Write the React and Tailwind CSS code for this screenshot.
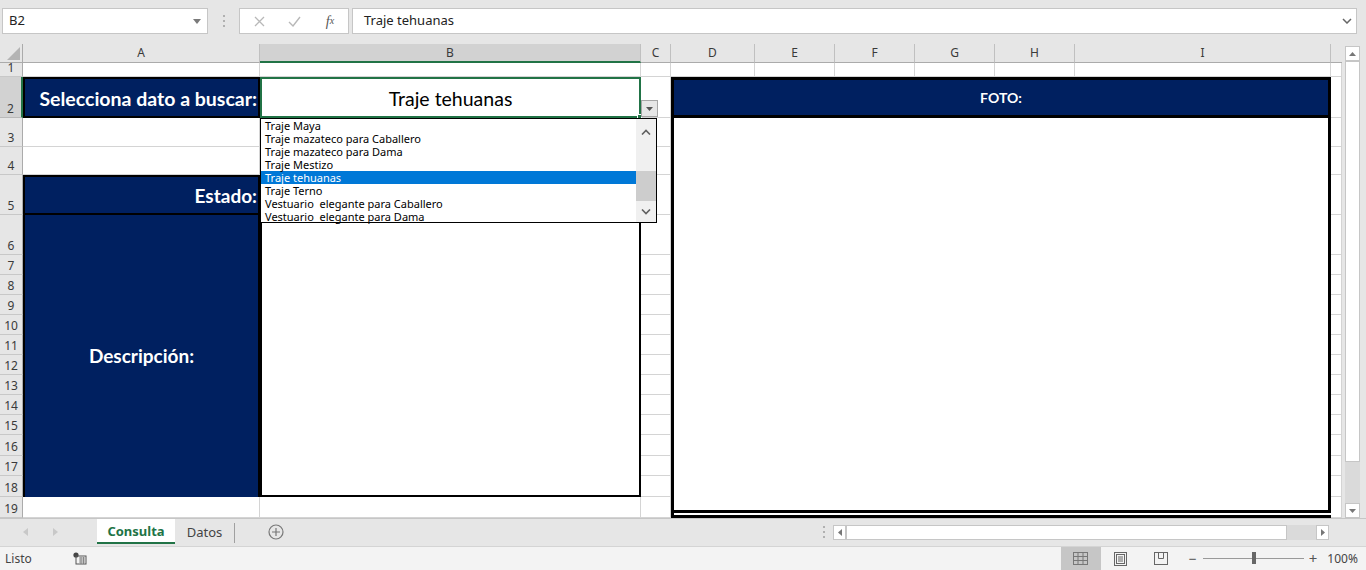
import React from "react";

const cols = ["A", "B", "C", "D", "E", "F", "G", "H", "I"];

const items = [
  "Traje Maya",
  "Traje mazateco para Caballero",
  "Traje mazateco para Dama",
  "Traje Mestizo",
  "Traje tehuanas",
  "Traje Terno",
  "Vestuario  elegante para Caballero",
  "Vestuario  elegante para Dama",
];

function G() {
  return <div className="bg-white border-r border-b border-[#d4d4d4]" />;
}

function RH({ n, sel }) {
  return (
    <div
      className={
        sel
          ? "bg-[#d2d2d2] border-r-2 border-r-[#217346] border-b border-b-[#b9b9b9] flex items-end justify-center text-[12px] leading-none pb-[2px] text-[#3a3a3a]"
          : "bg-[#e6e6e6] border-r border-r-[#ababab] border-b border-b-[#c8c8c8] flex items-end justify-center text-[12px] leading-none pb-[2px] text-[#3a3a3a]"
      }
    >
      {n}
    </div>
  );
}

function CH({ l, sel }) {
  return (
    <div
      className={
        sel
          ? "bg-[#d2d2d2] border-r border-r-[#c0c0c0] border-b-2 border-b-[#217346] flex items-center justify-center text-[12px] text-[#3a3a3a]"
          : "bg-[#e6e6e6] border-r border-r-[#c0c0c0] border-b border-b-[#ababab] flex items-center justify-center text-[12px] text-[#3a3a3a]"
      }
    >
      {l}
    </div>
  );
}

function Sheet() {
  const mid = [];
  for (let r = 7; r <= 18; r++) {
    mid.push(<RH key={"rh" + r} n={r} />);
    mid.push(<G key={"c" + r} />);
    mid.push(<G key={"j" + r} />);
  }

  return (
    <div className="relative w-[1342px] h-[474px] grid grid-cols-[23px_237px_381px_30px_84px_80px_80px_80px_80px_256px_11px] grid-rows-[19px_14px_41px_29px_28px_40px_40px_20px_20px_20px_20px_20px_20px_20px_20px_20px_21px_20px_21px_21px]">
      {/* header row */}
      <div className="bg-[#e6e6e6] border-r border-r-[#ababab] border-b border-b-[#ababab] relative">
        <svg className="absolute right-[2px] bottom-[2px]" width="13" height="13" viewBox="0 0 13 13">
          <polygon points="13,0 13,13 0,13" fill="#b4b4b4" />
        </svg>
      </div>
      {cols.map((c) => (
        <CH key={c} l={c} sel={c === "B"} />
      ))}
      <div className="bg-[#e6e6e6] border-b border-b-[#ababab]" />

      {/* row 1 */}
      <RH n={1} />
      <G /><G /><G /><G /><G /><G /><G /><G /><G /><G />

      {/* row 2 */}
      <RH n={2} sel />
      <div className="bg-[#002060] border-2 border-black flex items-center justify-end pr-[1px] pt-[3px] font-['Lato'] font-bold text-[19.5px] text-white whitespace-nowrap">
        Selecciona dato a buscar:
      </div>
      <div className="relative bg-white border-2 border-[#217346] flex items-center justify-center pt-[3px] font-['Lato'] text-[19.5px] text-black">
        Traje tehuanas
        <div className="absolute right-[-3px] bottom-[-3px] w-[5px] h-[5px] bg-[#217346] border border-white" />
      </div>
      <G />
      <div className="col-span-6 bg-[#002060] border-[3px] border-black flex items-center justify-center font-['Lato'] font-bold text-[14px] text-white">
        FOTO:
      </div>
      <G />

      {/* row 3 */}
      <RH n={3} />
      <G />
      <div className="row-span-16 bg-white border-l-2 border-r-2 border-b-2 border-black" />
      <G />
      <div className="col-span-6 row-span-17 bg-white flex flex-col">
        <div className="flex-1 border-l-[3px] border-r-[3px] border-b-[3px] border-black" />
        <div className="h-[2px] border-l-[3px] border-black" />
        <div className="h-[3px] bg-black" />
      </div>
      <G />

      {/* row 4 */}
      <RH n={4} />
      <G />
      <G />
      <G />

      {/* row 5 */}
      <RH n={5} />
      <div className="bg-[#002060] border-2 border-black flex items-center justify-end pr-[1px] pt-[2px] font-['Lato'] font-bold text-[19px] text-white">
        Estado:
      </div>
      <G />
      <G />

      {/* row 6 */}
      <RH n={6} />
      <div className="row-span-13 bg-[#002060] border-l-2 border-r-2 border-black flex items-center justify-center font-['Lato'] font-bold text-[19px] text-white">
        Descripción:
      </div>
      <G />
      <G />

      {mid}

      {/* row 19 */}
      <RH n={19} />
      <G />
      <G />
      <G />
      <G />

      {/* validation dropdown arrow */}
      <div className="absolute left-[641px] top-[56px] w-[17px] h-[17px] bg-[#e6e6e6] border border-[#a6a6a6] flex items-center justify-center">
        <svg width="7" height="4" viewBox="0 0 7 4">
          <polygon points="0,0 7,0 3.5,4" fill="#555" />
        </svg>
      </div>

      {/* validation list */}
      <div className="absolute left-[260px] top-[74px] w-[397px] h-[105px] bg-white border border-black flex">
        <div className="flex-1">
          {items.map((t, i) => (
            <div
              key={t}
              className={
                i === 4
                  ? "h-[13px] leading-[13px] pl-[4px] text-[11px] bg-[#0078d7] text-white whitespace-pre font-['Noto_Sans']"
                  : "h-[13px] leading-[13px] pl-[4px] text-[11px] text-black whitespace-pre font-['Noto_Sans']"
              }
            >
              {t}
            </div>
          ))}
        </div>
        <div className="w-[20px] bg-[#f0f0f0] flex flex-col">
          <div className="h-[21px] flex items-center justify-center pt-[4px]">
            <svg width="10" height="6" viewBox="0 0 10 6">
              <polyline points="1,5.5 5,1.5 9,5.5" fill="none" stroke="#606060" strokeWidth="1.6" />
            </svg>
          </div>
          <div className="h-[31px]" />
          <div className="h-[30px] bg-[#cdcdcd]" />
          <div className="flex-1 flex items-center justify-center">
            <svg width="10" height="6" viewBox="0 0 10 6">
              <polyline points="1,0.5 5,4.5 9,0.5" fill="none" stroke="#606060" strokeWidth="1.6" />
            </svg>
          </div>
        </div>
      </div>
    </div>
  );
}

function ArrowBox({ dir }) {
  return (
    <div className="w-[15px] h-[15px] bg-white border border-[#c6c6c6] flex items-center justify-center">
      <svg width="7" height="4" viewBox="0 0 7 4">
        {dir === "up" ? (
          <polygon points="0,4 7,4 3.5,0" fill="#777" />
        ) : (
          <polygon points="0,0 7,0 3.5,4" fill="#777" />
        )}
      </svg>
    </div>
  );
}

export default function App() {
  return (
    <div className="w-[1366px] h-[570px] bg-[#e6e6e6] flex flex-col overflow-hidden font-['Noto_Sans'] text-[#3a3a3a]">
      {/* formula bar */}
      <div className="h-[44px] flex items-start pt-[8px] pl-[2px]">
        <div className="w-[206px] h-[26px] bg-white border border-[#c6c6c6] flex items-center justify-between pl-[6px] pr-[6px] text-[13px] text-[#222]">
          <span>B2</span>
          <svg width="8" height="5" viewBox="0 0 8 5">
            <polygon points="0,0 8,0 4,5" fill="#7a7a7a" />
          </svg>
        </div>
        <div className="w-[31px] h-[26px] flex flex-col items-center justify-center gap-[3px]">
          <div className="w-[2px] h-[2px] bg-[#b0b0b0]" />
          <div className="w-[2px] h-[2px] bg-[#b0b0b0]" />
          <div className="w-[2px] h-[2px] bg-[#b0b0b0]" />
        </div>
        <div className="w-[110px] h-[26px] bg-white border border-[#c6c6c6] flex items-center">
          <div className="w-[37px] flex justify-center pl-[2px]">
            <svg width="11" height="11" viewBox="0 0 11 11">
              <path d="M1 1 L10 10 M10 1 L1 10" stroke="#b8b8b8" strokeWidth="1.3" />
            </svg>
          </div>
          <div className="w-[35px] flex justify-center">
            <svg width="13" height="11" viewBox="0 0 13 11">
              <path d="M1 6 L5 10 L12 1" fill="none" stroke="#b8b8b8" strokeWidth="1.4" />
            </svg>
          </div>
          <div className="w-[36px] flex justify-center font-['Liberation_Serif'] italic text-[14px] text-[#555]">
            f<span className="text-[10px] relative top-[2px]">x</span>
          </div>
        </div>
        <div className="ml-[3px] w-[1005px] h-[26px] bg-white border border-[#c6c6c6] flex items-center justify-between pl-[11px] pr-[4px] text-[13px] text-[#222]">
          <span>Traje tehuanas</span>
          <svg width="10" height="6" viewBox="0 0 10 6">
            <polyline points="1,1 5,5 9,1" fill="none" stroke="#666" strokeWidth="1.5" />
          </svg>
        </div>
      </div>

      {/* sheet + vertical scrollbar */}
      <div className="flex h-[474px]">
        <Sheet />
        <div className="w-[24px] pl-[3px] pt-[2px] flex flex-col">
          <ArrowBox dir="up" />
          <div className="h-[401px] w-[15px] bg-white border border-[#c6c6c6]" />
          <div className="flex-1 w-[15px] bg-[#dadada]" />
          <ArrowBox dir="down" />
        </div>
      </div>

      {/* sheet tabs */}
      <div className="h-[28px] border-t border-[#c6c6c6] flex items-start">
        <div className="w-[97px] h-[26px] flex items-center">
          <svg className="ml-[23px]" width="5" height="8" viewBox="0 0 5 8">
            <polygon points="5,0 5,8 0,4" fill="#c8c8c8" />
          </svg>
          <svg className="ml-[25px]" width="5" height="8" viewBox="0 0 5 8">
            <polygon points="0,0 0,8 5,4" fill="#c8c8c8" />
          </svg>
        </div>
        <div className="w-[78px] h-[25px] pt-[2px] bg-white border-b-2 border-[#217346] flex items-center justify-center font-bold text-[13px] text-[#217346]">
          Consulta
        </div>
        <div className="w-[59px] h-[25px] pt-[2px] flex items-center justify-center text-[13px] text-[#444]">
          Datos
        </div>
        <div className="w-[1px] h-[20px] mt-[4px] bg-[#a0a0a0]" />
        <div className="ml-[33px] h-[26px] flex items-center">
          <svg width="16" height="16" viewBox="0 0 16 16">
            <circle cx="8" cy="8" r="7" fill="none" stroke="#777" strokeWidth="1.2" />
            <path d="M8 4 V12 M4 8 H12" stroke="#777" strokeWidth="1.2" />
          </svg>
        </div>
        <div className="ml-[532px] w-[16px] h-[26px] flex flex-col items-center justify-center gap-[3px]">
          <div className="w-[2px] h-[2px] bg-[#b0b0b0]" />
          <div className="w-[2px] h-[2px] bg-[#b0b0b0]" />
          <div className="w-[2px] h-[2px] bg-[#b0b0b0]" />
        </div>
        <div className="ml-[1px] mt-[6px] flex h-[15px]">
          <div className="w-[13px] h-[15px] bg-white border border-[#c6c6c6] flex items-center justify-center">
            <svg width="4" height="7" viewBox="0 0 4 7">
              <polygon points="4,0 4,7 0,3.5" fill="#777" />
            </svg>
          </div>
          <div className="w-[441px] h-[15px] bg-white border border-[#c6c6c6]" />
          <div className="w-[29px] h-[15px] bg-[#dadada]" />
          <div className="w-[13px] h-[15px] bg-white border border-[#c6c6c6] flex items-center justify-center">
            <svg width="4" height="7" viewBox="0 0 4 7">
              <polygon points="0,0 0,7 4,3.5" fill="#777" />
            </svg>
          </div>
        </div>
      </div>

      {/* status bar */}
      <div className="h-[24px] bg-[#f3f3f3] border-t border-[#d4d4d4] flex items-center text-[12px] text-[#444]">
        <span className="ml-[5px]">Listo</span>
        <svg className="ml-[41px]" width="14" height="13" viewBox="0 0 14 13">
          <circle cx="3" cy="3" r="2.6" fill="#444" />
          <rect x="3" y="4" width="10" height="8" fill="none" stroke="#555" strokeWidth="1" />
          <path d="M6 6 H12 M6 8 H12 M6 10 H12 M8 5 V12 M10.5 5 V12" stroke="#777" strokeWidth="0.8" />
        </svg>
        <div className="ml-[974px] w-[40px] h-[23px] bg-[#c6c6c6] flex items-center justify-center">
          <svg width="15" height="13" viewBox="0 0 15 13">
            <rect x="0.5" y="0.5" width="14" height="12" fill="none" stroke="#777" />
            <path d="M5 0.5 V12.5 M10 0.5 V12.5 M0.5 4.5 H14.5 M0.5 8.5 H14.5" stroke="#777" />
          </svg>
        </div>
        <div className="w-[40px] h-[23px] flex items-center justify-center">
          <svg width="13" height="14" viewBox="0 0 13 14">
            <rect x="0.5" y="0.5" width="12" height="13" fill="none" stroke="#666" />
            <rect x="2.5" y="2.5" width="8" height="9" fill="none" stroke="#666" />
            <path d="M4 5 H9 M4 7 H9 M4 9 H9" stroke="#666" />
          </svg>
        </div>
        <div className="w-[40px] h-[23px] flex items-center justify-center">
          <svg width="14" height="13" viewBox="0 0 14 13">
            <rect x="0.5" y="0.5" width="13" height="12" fill="none" stroke="#666" />
            <path d="M4.5 0.5 V6.5 H9.5 V0.5" fill="none" stroke="#666" />
          </svg>
        </div>
        <span className="ml-[8px] text-[14px] text-[#555]">−</span>
        <div className="relative ml-[6px] w-[101px] h-[1px] bg-[#999]">
          <div className="absolute left-[49px] top-[-6px] w-[4px] h-[12px] bg-[#666]" />
        </div>
        <span className="ml-[5px] text-[15px] text-[#555]">+</span>
        <span className="ml-[10px] text-[12px] text-[#444]">100%</span>
      </div>
    </div>
  );
}
